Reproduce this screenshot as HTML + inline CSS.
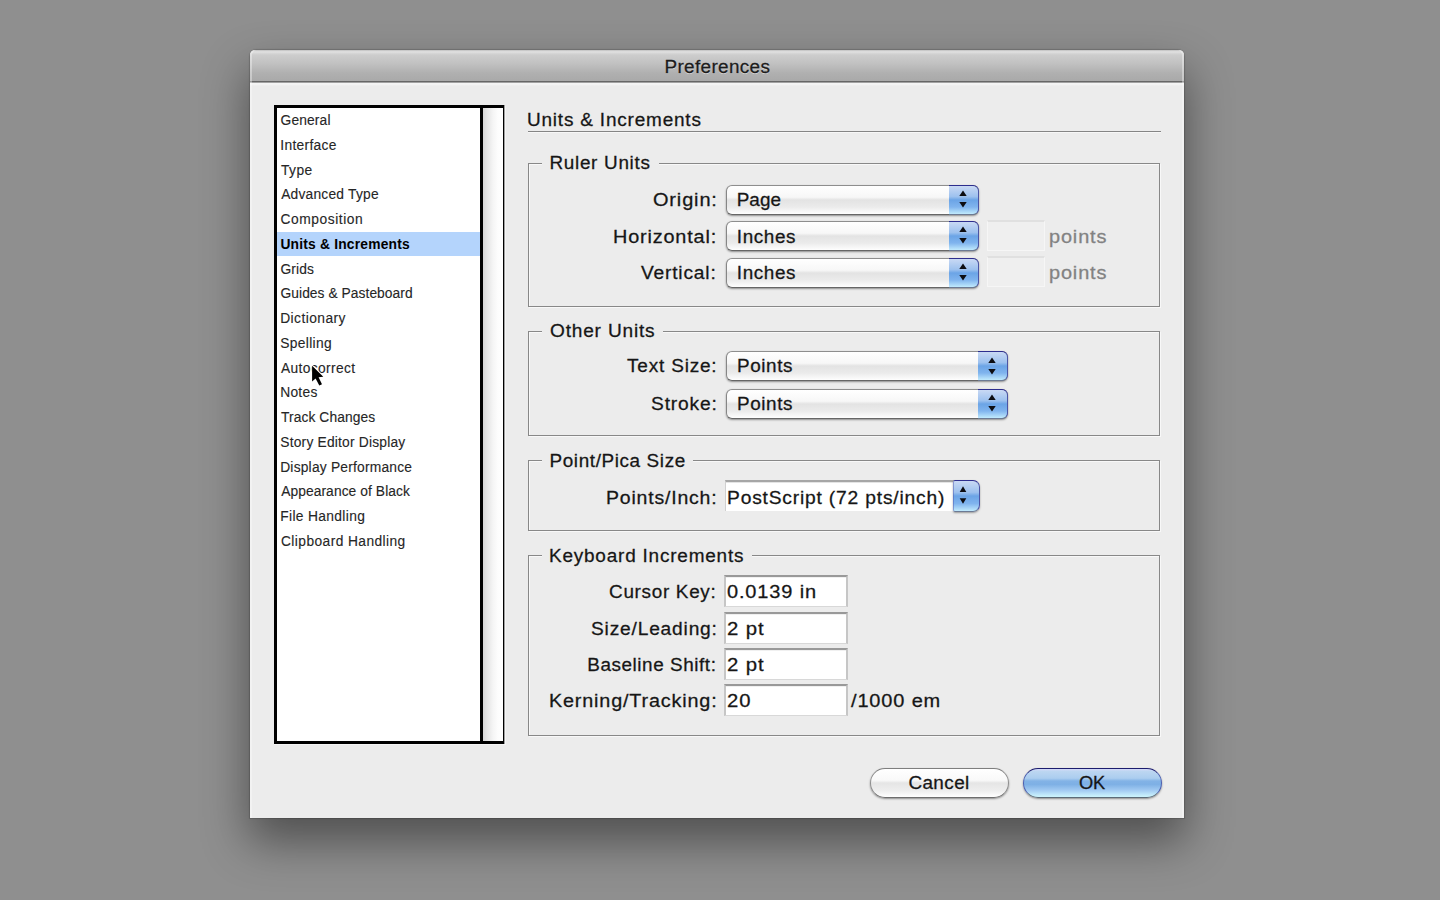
<!DOCTYPE html>
<html>
<head>
<meta charset="utf-8">
<title>Preferences</title>
<style>
*{box-sizing:border-box;margin:0;padding:0}
html,body{width:1440px;height:900px;overflow:hidden}
body{background:#8f8f8f;font-family:"Liberation Sans",sans-serif;color:#161616;position:relative}
.abs{position:absolute}
#shadow{position:absolute;left:250px;top:50px;width:934px;height:768px;border-radius:6px 6px 0 0;
  box-shadow:0 22px 46px 2px rgba(0,0,0,.44),0 0 1px 1px rgba(0,0,0,.16)}
#win{position:absolute;left:250px;top:50px;width:934px;height:768px;background:#ececec;border-radius:5px 5px 0 0;overflow:hidden}
#win:after{content:"";position:absolute;left:0;top:0;width:934px;height:768px;border-radius:5px 5px 0 0;box-shadow:inset 2px 0 0 rgba(255,255,255,.35),inset -2px 0 0 rgba(255,255,255,.35)}
#title{position:absolute;left:0;top:0;width:934px;height:32px;background:linear-gradient(#bcbcbc 0,#dbdbdb 1.2px,#dfdfdf 2.2px,#d4d4d4 3.6px,#cdcdcd 5px,#c0c0c0 14px,#b0b0b0 23px,#a9a9a9 31px);border-bottom:1px solid #666}
#titlehl{position:absolute;left:0;top:32px;width:934px;height:4px;background:linear-gradient(#a2a2a2 0,#a2a2a2 1px,#f4f4f4 1px,#f3f3f3 2.5px,#ececec 4px)}
.t{position:absolute;white-space:nowrap;line-height:normal;font-size:18.9px;transform-origin:0 0;-webkit-text-stroke:0.27px currentColor}
/* list */
#list{position:absolute;left:274px;top:105px;width:209px;height:639px;border:3px solid #000;background:#fff;box-shadow:0 1px 0 #f5f5f5}
#sb{position:absolute;left:480px;top:105px;width:24px;height:639px;border:3px solid #000;border-right:1px solid #000;box-shadow:1px 0 0 rgba(0,0,0,.35),2px 1px 0 #f5f5f5;background:linear-gradient(90deg,#d6d6d6 0,#e4e4e4 20%,#f5f5f5 50%,#fdfdfd 75%,#fff 100%)}
#sel{position:absolute;left:277px;top:232px;width:203px;height:24px;background:#b4d4fc}
/* group boxes */
.gb{position:absolute;border:1px solid #888;box-shadow:1px 1px 0 #f8f8f8, inset 1px 1px 0 #f8f8f8}
.gap{position:absolute;background:#ececec;height:4px}
/* popup */
.pop{position:absolute;height:30px;border-radius:6px;border:1px solid #868686;border-top-color:#8e8e8e;border-bottom-color:#666;
 background:linear-gradient(#ffffff 0,#f7f7f7 40%,#e3e3e3 50%,#ebebeb 75%,#fefefe 100%);box-shadow:0 1px 2px rgba(0,0,0,.4)}
.cap{position:absolute;width:30px;height:30px;border-radius:0 6px 6px 0;border:1px solid #4b54a4;border-top-color:#2e2e8e;border-bottom-color:#6c7a94;border-left:none;
 background:linear-gradient(#c9d9f4 0,#9dc1ee 38%,#6ba4e6 50%,#80b4ee 75%,#c0eafd 100%)}
.arr{position:absolute}
/* text fields */
.tf{position:absolute;height:32px;width:124px;background:#fff;border:2px solid #c6c6c6;border-top:2px solid #999;border-bottom:1px solid #d8d8d8;box-shadow:inset 0 1px 0 rgba(0,0,0,.06)}
.dtf{position:absolute;width:58px;height:31px;background:#efefef;border:1px solid #f6f6f6;border-top:2px solid #e0e0e0}
/* buttons */
.btn{position:absolute;width:139px;height:30px;border-radius:15px}
#cancel{border:1px solid #8c8c8c;border-top-color:#7e7e7e;border-bottom-color:#6e6e6e;background:linear-gradient(#ffffff 0,#f9f9f9 40%,#e5e5e5 50%,#eeeeee 78%,#ffffff 100%);box-shadow:0 1px 2px rgba(0,0,0,.4)}
#ok{border:1px solid #4a5eb0;border-top-color:#1c1c6e;border-bottom-color:#5c6b78;background:linear-gradient(#d4d9f8 0,#bcd6f1 9%,#abcdef 33%,#82b2e6 43%,#7eb0e5 55%,#a2caf2 76%,#c4ecfb 94%,#cbf3fc 100%);box-shadow:0 1px 2px rgba(0,0,0,.4)}
</style>
</head>
<body>
<div id="shadow"></div>
<div id="win">
  <div id="title"></div>
  <div id="titlehl"></div>
</div>

<!-- list -->
<div id="sb"></div>
<div id="list"></div>
<div id="sel"></div>

<!-- heading underline -->
<div class="abs" style="left:528px;top:131px;width:633px;height:1px;background:#858585"></div>
<div class="abs" style="left:528px;top:132px;width:633px;height:1px;background:#f7f7f7"></div>

<!-- group boxes -->
<div class="gb" style="left:528px;top:163px;width:632px;height:144px"></div>
<div class="gap" style="left:542px;top:162px;width:117px"></div>
<div class="gb" style="left:528px;top:331px;width:632px;height:105px"></div>
<div class="gap" style="left:542px;top:330px;width:121px"></div>
<div class="gb" style="left:528px;top:460px;width:632px;height:71px"></div>
<div class="gap" style="left:542px;top:459px;width:151px"></div>
<div class="gb" style="left:528px;top:555px;width:632px;height:181px"></div>
<div class="gap" style="left:542px;top:554px;width:210px"></div>

<!-- popups -->
<div class="pop" style="left:726px;top:185px;width:253px"></div><div class="cap" style="left:949px;top:185px"></div>
<div class="pop" style="left:726px;top:221px;width:253px"></div><div class="cap" style="left:949px;top:221px"></div>
<div class="pop" style="left:726px;top:258px;width:253px"></div><div class="cap" style="left:949px;top:258px"></div>
<div class="pop" style="left:726px;top:351px;width:282px"></div><div class="cap" style="left:978px;top:351px"></div>
<div class="pop" style="left:726px;top:389px;width:282px"></div><div class="cap" style="left:978px;top:389px"></div>
<svg class="arr" style="left:956.8px;top:190.3px" width="12" height="20" viewBox="0 0 12 20"><path d="M6 0.4 L9.7 6.1 H2.3 Z M6 17.4 L9.7 12 H2.3 Z" fill="#0d0d12"/></svg>
<svg class="arr" style="left:956.8px;top:226.3px" width="12" height="20" viewBox="0 0 12 20"><path d="M6 0.4 L9.7 6.1 H2.3 Z M6 17.4 L9.7 12 H2.3 Z" fill="#0d0d12"/></svg>
<svg class="arr" style="left:956.8px;top:263.3px" width="12" height="20" viewBox="0 0 12 20"><path d="M6 0.4 L9.7 6.1 H2.3 Z M6 17.4 L9.7 12 H2.3 Z" fill="#0d0d12"/></svg>
<svg class="arr" style="left:985.8px;top:356.5px" width="12" height="20" viewBox="0 0 12 20"><path d="M6 0.4 L9.7 6.1 H2.3 Z M6 17.4 L9.7 12 H2.3 Z" fill="#0d0d12"/></svg>
<svg class="arr" style="left:985.8px;top:394.2px" width="12" height="20" viewBox="0 0 12 20"><path d="M6 0.4 L9.7 6.1 H2.3 Z M6 17.4 L9.7 12 H2.3 Z" fill="#0d0d12"/></svg>

<!-- disabled fields -->
<div class="dtf" style="left:987px;top:220px"></div>
<div class="dtf" style="left:987px;top:256px"></div>

<!-- points/inch -->
<div class="abs" style="left:725px;top:480px;width:229px;height:31px;background:#fff;border-top:2px solid #a6a6a6;border-left:1px solid #d0d0d0;box-shadow:inset 0 1px 0 #e4e4e4"></div>
<div class="cap" style="left:953px;top:480px;width:27px;height:32px;box-shadow:0 1px 2px rgba(0,0,0,.35);border-left:1px solid rgba(70,80,170,.45);border-radius:2px 7px 7px 2px"></div>
<svg class="arr" style="left:957.2px;top:486px" width="12" height="20" viewBox="0 0 12 20"><path d="M6 0.2 L9.3 5.9 H2.7 Z M6 17.8 L9.3 12.3 H2.7 Z" fill="#0d0d12"/></svg>

<!-- text fields -->
<div class="tf" style="left:724px;top:575px"></div>
<div class="tf" style="left:724px;top:612px"></div>
<div class="tf" style="left:724px;top:648px"></div>
<div class="tf" style="left:724px;top:684px"></div>

<!-- buttons -->
<div class="btn" id="cancel" style="left:870px;top:768px"></div>
<div class="btn" id="ok" style="left:1023px;top:768px"></div>

<div class="t" id="ttl" style="left:664.47px;top:56px;font-size:18.9px;letter-spacing:0.356px;color:#1c1c1c;text-shadow:0 1px 0 rgba(255,255,255,.45);">Preferences</div>
<div class="t" id="hd" style="left:526.97px;top:109px;font-size:18.9px;letter-spacing:0.800px;transform:scaleX(1.0042);">Units &amp; Increments</div>
<div class="t" id="g1" style="left:549.43px;top:152px;font-size:18.9px;letter-spacing:0.706px;">Ruler Units</div>
<div class="t" id="l1" style="left:652.77px;top:189px;font-size:18.9px;letter-spacing:0.800px;transform:scaleX(1.0568);">Origin:</div>
<div class="t" id="l2" style="left:613.16px;top:226px;font-size:18.9px;letter-spacing:0.800px;transform:scaleX(1.0503);">Horizontal:</div>
<div class="t" id="l3" style="left:641.25px;top:262px;font-size:18.9px;letter-spacing:0.800px;transform:scaleX(1.0152);">Vertical:</div>
<div class="t" id="p1" style="left:736.64px;top:189px;font-size:18.9px;letter-spacing:0.110px;">Page</div>
<div class="t" id="p2" style="left:736.79px;top:226px;font-size:18.9px;letter-spacing:0.607px;">Inches</div>
<div class="t" id="p3" style="left:736.79px;top:262px;font-size:18.9px;letter-spacing:0.607px;">Inches</div>
<div class="t" id="d1" style="left:1049.21px;top:226px;font-size:18.9px;letter-spacing:0.800px;transform:scaleX(1.0554);color:#828282;">points</div>
<div class="t" id="d2" style="left:1049.21px;top:262px;font-size:18.9px;letter-spacing:0.800px;transform:scaleX(1.0554);color:#828282;">points</div>
<div class="t" id="g2" style="left:550.07px;top:320px;font-size:18.9px;letter-spacing:0.800px;transform:scaleX(1.0106);">Other Units</div>
<div class="t" id="l4" style="left:626.88px;top:355px;font-size:18.9px;letter-spacing:0.800px;transform:scaleX(1.0063);">Text Size:</div>
<div class="t" id="l5" style="left:650.68px;top:393px;font-size:18.9px;letter-spacing:0.800px;transform:scaleX(1.0170);">Stroke:</div>
<div class="t" id="p4" style="left:736.97px;top:355px;font-size:18.9px;letter-spacing:0.611px;">Points</div>
<div class="t" id="p5" style="left:736.97px;top:393px;font-size:18.9px;letter-spacing:0.611px;">Points</div>
<div class="t" id="g3" style="left:549.47px;top:450px;font-size:18.9px;letter-spacing:0.623px;">Point/Pica Size</div>
<div class="t" id="l6" style="left:606.19px;top:487px;font-size:18.9px;letter-spacing:0.800px;transform:scaleX(1.0294);">Points/Inch:</div>
<div class="t" id="p6" style="left:726.97px;top:487px;font-size:18.9px;letter-spacing:0.800px;transform:scaleX(1.0173);">PostScript (72 pts/inch)</div>
<div class="t" id="g4" style="left:549.47px;top:545px;font-size:18.9px;letter-spacing:0.800px;transform:scaleX(1.0025);">Keyboard Increments</div>
<div class="t" id="l7" style="left:609.07px;top:581px;font-size:18.9px;letter-spacing:0.696px;">Cursor Key:</div>
<div class="t" id="l8" style="left:590.71px;top:618px;font-size:18.9px;letter-spacing:0.800px;transform:scaleX(1.0147);">Size/Leading:</div>
<div class="t" id="l9" style="left:587.25px;top:654px;font-size:18.9px;letter-spacing:0.563px;">Baseline Shift:</div>
<div class="t" id="l10" style="left:549.16px;top:690px;font-size:18.9px;letter-spacing:0.800px;transform:scaleX(1.0468);">Kerning/Tracking:</div>
<div class="t" id="f1" style="left:727.44px;top:581px;font-size:18.9px;letter-spacing:0.800px;transform:scaleX(1.0587);">0.0139 in</div>
<div class="t" id="f2" style="left:727.10px;top:618px;font-size:18.9px;letter-spacing:0.800px;transform:scaleX(1.0773);">2 pt</div>
<div class="t" id="f3" style="left:727.10px;top:654px;font-size:18.9px;letter-spacing:0.800px;transform:scaleX(1.0773);">2 pt</div>
<div class="t" id="f4" style="left:727.11px;top:690px;font-size:18.9px;letter-spacing:0.800px;transform:scaleX(1.0731);">20</div>
<div class="t" id="f5" style="left:850.83px;top:690px;font-size:18.9px;letter-spacing:0.800px;transform:scaleX(1.0582);">/1000 em</div>
<div class="t" id="b1" style="left:908.41px;top:772px;font-size:18.9px;letter-spacing:0.406px;">Cancel</div>
<div class="t" id="b2" style="left:1078.52px;top:772px;font-size:18.9px;letter-spacing:-0.300px;transform:scaleX(0.9665);">OK</div>
<div class="t" id="i0" style="left:280.53px;top:113px;font-size:13.8px;letter-spacing:0.142px;color:#262626;-webkit-text-stroke:0.12px currentColor;">General</div>
<div class="t" id="i1" style="left:280.31px;top:138px;font-size:13.8px;letter-spacing:0.310px;color:#262626;-webkit-text-stroke:0.12px currentColor;">Interface</div>
<div class="t" id="i2" style="left:281.06px;top:163px;font-size:13.8px;letter-spacing:0.406px;color:#262626;-webkit-text-stroke:0.12px currentColor;">Type</div>
<div class="t" id="i3" style="left:281.15px;top:187px;font-size:13.8px;letter-spacing:0.218px;color:#262626;-webkit-text-stroke:0.12px currentColor;">Advanced Type</div>
<div class="t" id="i4" style="left:280.51px;top:212px;font-size:13.8px;letter-spacing:0.545px;color:#262626;-webkit-text-stroke:0.12px currentColor;">Composition</div>
<div class="t" id="i5" style="left:280.42px;top:237px;font-size:13.8px;letter-spacing:0.208px;color:#000;font-weight:bold;-webkit-text-stroke:0;">Units &amp; Increments</div>
<div class="t" id="i6" style="left:280.53px;top:262px;font-size:13.8px;letter-spacing:0.105px;color:#262626;-webkit-text-stroke:0.12px currentColor;">Grids</div>
<div class="t" id="i7" style="left:280.53px;top:286px;font-size:13.8px;letter-spacing:0.053px;color:#262626;-webkit-text-stroke:0.12px currentColor;">Guides &amp; Pasteboard</div>
<div class="t" id="i8" style="left:280.20px;top:311px;font-size:13.8px;letter-spacing:0.436px;color:#262626;-webkit-text-stroke:0.12px currentColor;">Dictionary</div>
<div class="t" id="i9" style="left:280.27px;top:336px;font-size:13.8px;letter-spacing:0.330px;color:#262626;-webkit-text-stroke:0.12px currentColor;">Spelling</div>
<div class="t" id="i10" style="left:281.19px;top:361px;font-size:13.8px;letter-spacing:0.379px;transform:scaleX(0.9967);color:#262626;-webkit-text-stroke:0.12px currentColor;">Autocorrect</div>
<div class="t" id="i11" style="left:280.20px;top:385px;font-size:13.8px;letter-spacing:0.265px;color:#262626;-webkit-text-stroke:0.12px currentColor;">Notes</div>
<div class="t" id="i12" style="left:281.11px;top:410px;font-size:13.8px;letter-spacing:0.074px;color:#262626;-webkit-text-stroke:0.12px currentColor;">Track Changes</div>
<div class="t" id="i13" style="left:280.27px;top:435px;font-size:13.8px;letter-spacing:0.203px;color:#262626;-webkit-text-stroke:0.12px currentColor;">Story Editor Display</div>
<div class="t" id="i14" style="left:280.20px;top:460px;font-size:13.8px;letter-spacing:0.205px;color:#262626;-webkit-text-stroke:0.12px currentColor;">Display Performance</div>
<div class="t" id="i15" style="left:281.15px;top:484px;font-size:13.8px;letter-spacing:0.082px;color:#262626;-webkit-text-stroke:0.12px currentColor;">Appearance of Black</div>
<div class="t" id="i16" style="left:280.20px;top:509px;font-size:13.8px;letter-spacing:0.348px;color:#262626;-webkit-text-stroke:0.12px currentColor;">File Handling</div>
<div class="t" id="i17" style="left:280.64px;top:534px;font-size:13.8px;letter-spacing:0.429px;transform:scaleX(0.9968);color:#262626;-webkit-text-stroke:0.12px currentColor;">Clipboard Handling</div>

<!-- cursor -->
<svg class="abs" style="left:300px;top:355px" width="40" height="40" viewBox="0 0 40 40"><path d="M12.1 10.7 L12.1 26.5 L15.6 23.5 L19.3 30.5 L22 29.2 L18.6 22.3 L23.3 21.7 Z" fill="#000" stroke="#fff" stroke-width="1.7" stroke-linejoin="round" paint-order="stroke"/></svg>
</body>
</html>
